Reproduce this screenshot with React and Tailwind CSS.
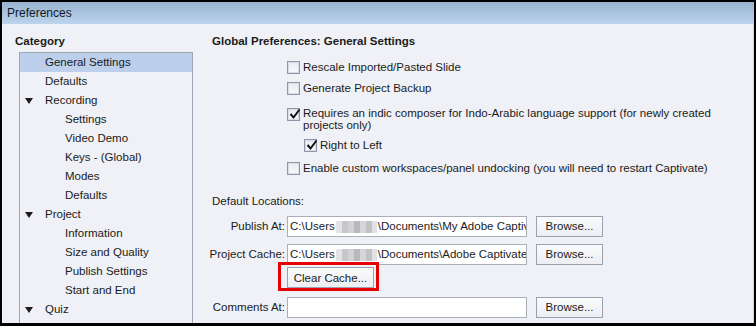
import React from 'react';

const font = { fontFamily: '"Liberation Sans", Arial, sans-serif' };

const tree = [
  { label: 'General Settings', level: 0, selected: true },
  { label: 'Defaults', level: 0 },
  { label: 'Recording', level: 0, open: true },
  { label: 'Settings', level: 1 },
  { label: 'Video Demo', level: 1 },
  { label: 'Keys - (Global)', level: 1 },
  { label: 'Modes', level: 1 },
  { label: 'Defaults', level: 1 },
  { label: 'Project', level: 0, open: true },
  { label: 'Information', level: 1 },
  { label: 'Size and Quality', level: 1 },
  { label: 'Publish Settings', level: 1 },
  { label: 'Start and End', level: 1 },
  { label: 'Quiz', level: 0, open: true },
];

const Checkbox = ({ checked }) => (
  <div className="relative w-[13px] h-[13px] shrink-0 border border-[#8e96a8] bg-gradient-to-b from-[#e9ebf0] to-[#fbfbfd] shadow-[inset_0_0_0_1px_#d8dce6]">
    {checked && (
      <svg className="absolute left-[1px] top-[-1px]" width="12" height="12" viewBox="0 0 12 12">
        <path d="M1.5 6 L4.5 9.5 L10.5 1.5" fill="none" stroke="#111" strokeWidth="2" />
      </svg>
    )}
  </div>
);

const Blur = () => (
  <span className="inline-flex h-[12px] items-stretch mx-[1px]">
    <span className="w-[6px] bg-[#e4e4e6]" />
    <span className="w-[6px] bg-[#c8c8ca]" />
    <span className="w-[6px] bg-[#d2d2d4]" />
    <span className="w-[6px] bg-[#b9b9bc]" />
    <span className="w-[6px] bg-[#d6d6d8]" />
    <span className="w-[6px] bg-[#c2c2c5]" />
    <span className="w-[5px] bg-[#e2e2e4]" />
  </span>
);

const Button = ({ children, className = '' }) => (
  <button className={`h-[21px] border border-[#9aa2b0] bg-gradient-to-b from-[#fbfbfc] to-[#eceef2] text-[#1b1b1b] ${className}`}>
    {children}
  </button>
);

const PathRow = ({ label, value }) => (
  <div className="flex items-center h-[21px]">
    <div className="w-[73px] flex justify-end whitespace-nowrap">{label}</div>
    <div className="ml-[2px] w-[240px] h-[21px] bg-white border border-[#a9afb9] flex items-center pl-[2px] overflow-hidden whitespace-nowrap">
      {value}
    </div>
    <Button className="ml-[9px] w-[67px]">Browse...</Button>
  </div>
);

export default function App() {
  return (
    <div className="w-[756px] h-[326px] bg-black pl-[2px] pt-[2px] pr-[2px] pb-[3px] text-[11.5px] leading-[15px] text-[#1b1b1b]" style={font}>
      <div className="w-full h-full flex flex-col bg-[#eff1f6]">
        <div className="h-[22px] shrink-0 bg-gradient-to-b from-[#98b3d1] to-[#bcd4ec] flex items-center pl-[5px] text-[12px] text-[#111827]">
          Preferences
        </div>
        <div className="flex-1 flex min-h-0 border-r border-[#d0d6e2]">
          <div className="w-[198px] shrink-0 flex flex-col">
            <div className="pl-[13px] pt-[10px] h-[28px] font-bold">Category</div>
            <div className="ml-[17px] w-[174px] flex-1 border-l border-r border-t border-[#9ea6b5] overflow-hidden">
              {tree.map((item, i) => (
                <div
                  key={i}
                  className={`h-[19px] flex items-center relative ${item.selected ? 'bg-[#bcd0ec]' : ''}`}
                  style={{ paddingLeft: item.level ? 45 : 25 }}
                >
                  {item.open && (
                    <svg className="absolute left-[5px] top-[7px]" width="8" height="6" viewBox="0 0 8 6">
                      <path d="M0 0 H8 L4 6 Z" fill="#1b1b1b" />
                    </svg>
                  )}
                  {item.label}
                </div>
              ))}
            </div>
          </div>
          <div className="flex-1 min-w-0 pl-[12px] flex flex-col whitespace-nowrap relative z-10">
            <div className="pt-[10px] font-bold">Global Preferences: General Settings</div>
            <div className="ml-[75px] mt-[11px] flex items-center gap-[3px]">
              <Checkbox />
              <span>Rescale Imported/Pasted Slide</span>
            </div>
            <div className="ml-[75px] mt-[6px] flex items-center gap-[3px]">
              <Checkbox />
              <span>Generate Project Backup</span>
            </div>
            <div className="ml-[75px] mt-[11px] flex items-start gap-[3px] leading-[12px]">
              <div className="mt-[1px]"><Checkbox checked /></div>
              <span>Requires an indic composer for Indo-Arabic language support (for newly created<br />projects only)</span>
            </div>
            <div className="ml-[92px] mt-[7px] flex items-center gap-[3px]">
              <Checkbox checked />
              <span>Right to Left</span>
            </div>
            <div className="ml-[75px] mt-[8px] flex items-center gap-[3px]">
              <Checkbox />
              <span>Enable custom workspaces/panel undocking (you will need to restart Captivate)</span>
            </div>
            <div className="mt-[18px]">Default Locations:</div>
            <div className="mt-[7px]">
              <PathRow label="Publish At:" value={<>C:\Users<Blur />\Documents\My Adobe Captiva</>} />
            </div>
            <div className="mt-[7px]">
              <PathRow label="Project Cache:" value={<>C:\Users<Blur />\Documents\Adobe Captivate (</>} />
            </div>
            <div className="ml-[75px] mt-[2px] relative w-[87px]">
              <div className="absolute left-[-9px] top-[-5px] w-[101px] h-[29px] border-[3px] border-[#e60000]" />
              <Button className="w-[87px] h-[18px] leading-[14px]">Clear Cache...</Button>
            </div>
            <div className="mt-[9px]">
              <PathRow label="Comments At:" value="" />
            </div>
          </div>
          <div className="w-[38px] shrink-0 bg-[#f0f2f7]" />
        </div>
      </div>
    </div>
  );
}
